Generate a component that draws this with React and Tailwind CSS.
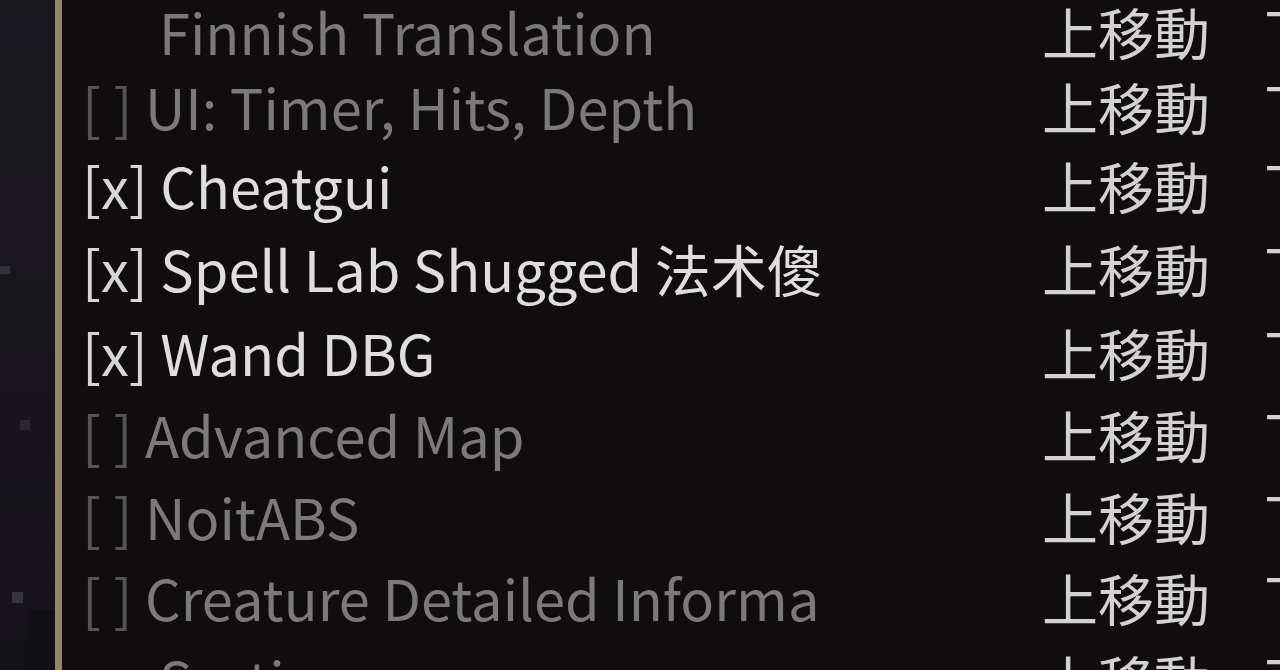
const rows = [
  { label: "Finnish Translation", sub: true, on: false, h: "h-[73px]" },
  { label: "UI: Timer, Hits, Depth", on: false, h: "h-[77px]" },
  { label: "Cheatgui", on: true, h: "h-[82px]" },
  { label: "Spell Lab Shugged", cn: "法术傻", on: true, h: "h-[84px]" },
  { label: "Wand DBG", on: true, h: "h-[83px]" },
  { label: "Advanced Map", on: false, h: "h-[82px]" },
  { label: "NoitABS", on: false, h: "h-[81px]" },
  { label: "Creature Detailed Informa", on: false, h: "h-[81px]" },
  { label: "Sorting", sub: true, on: false, h: "h-[83px]" },
];

const Row = ({ label, cn, sub, on, h }) => (
  <div className={`flex shrink-0 items-center ${h} whitespace-nowrap`}>
    <div className="w-[960px] flex items-center">
      {sub ? (
        <span className="pl-[97px] text-[#7a7a7a]">{label}</span>
      ) : (
        <span className="pl-[20px]">
          <span className={on ? "text-[#d6d6d6]" : "text-[#555555]"}>
            {on ? "[x]" : "[ ]"}
          </span>{" "}
          <span className={on ? "text-[#dedede]" : "text-[#7a7a7a]"}>
            {label}
            {cn && (
              <span style={{ fontFamily: '"Noto Sans CJK SC", sans-serif' }}> {cn}</span>
            )}
          </span>
        </span>
      )}
    </div>
    <span className="ml-[20px] text-[#d2d2d2]">上移動</span>
    <span className="ml-[54px] text-[#d2d2d2]">下移動</span>
  </div>
);

export default function App() {
  return (
    <div
      className="w-[1280px] h-[670px] flex overflow-hidden bg-[#0f0d0e] text-[56px] leading-none"
      style={{ fontFamily: '"Noto Sans CJK JP", "Noto Sans", sans-serif' }}
    >
      {/* left background strip */}
      <div className="relative w-[55px] shrink-0 bg-gradient-to-b from-[#19181d] to-[#16141a]">
        <div className="absolute left-0 top-[266px] w-[10px] h-[8px] bg-[#333238]" />
        <div className="absolute left-[20px] top-[420px] w-[10px] h-[10px] bg-[#2a292f]" />
        <div className="absolute left-[12px] top-[592px] w-[11px] h-[11px] bg-[#36353b]" />
        <div className="absolute left-[28px] bottom-0 w-[27px] h-[60px] bg-[#111015]" />
        <div className="absolute left-0 bottom-0 w-[28px] h-[30px] bg-[#131217]" />
      </div>
      {/* gold frame line */}
      <div className="w-[7px] shrink-0 bg-[#9b8467]" />
      {/* list panel */}
      <div className="flex-1 flex flex-col mt-[-6px]">
        {rows.map((r) => (
          <Row key={r.label} {...r} />
        ))}
      </div>
    </div>
  );
}
